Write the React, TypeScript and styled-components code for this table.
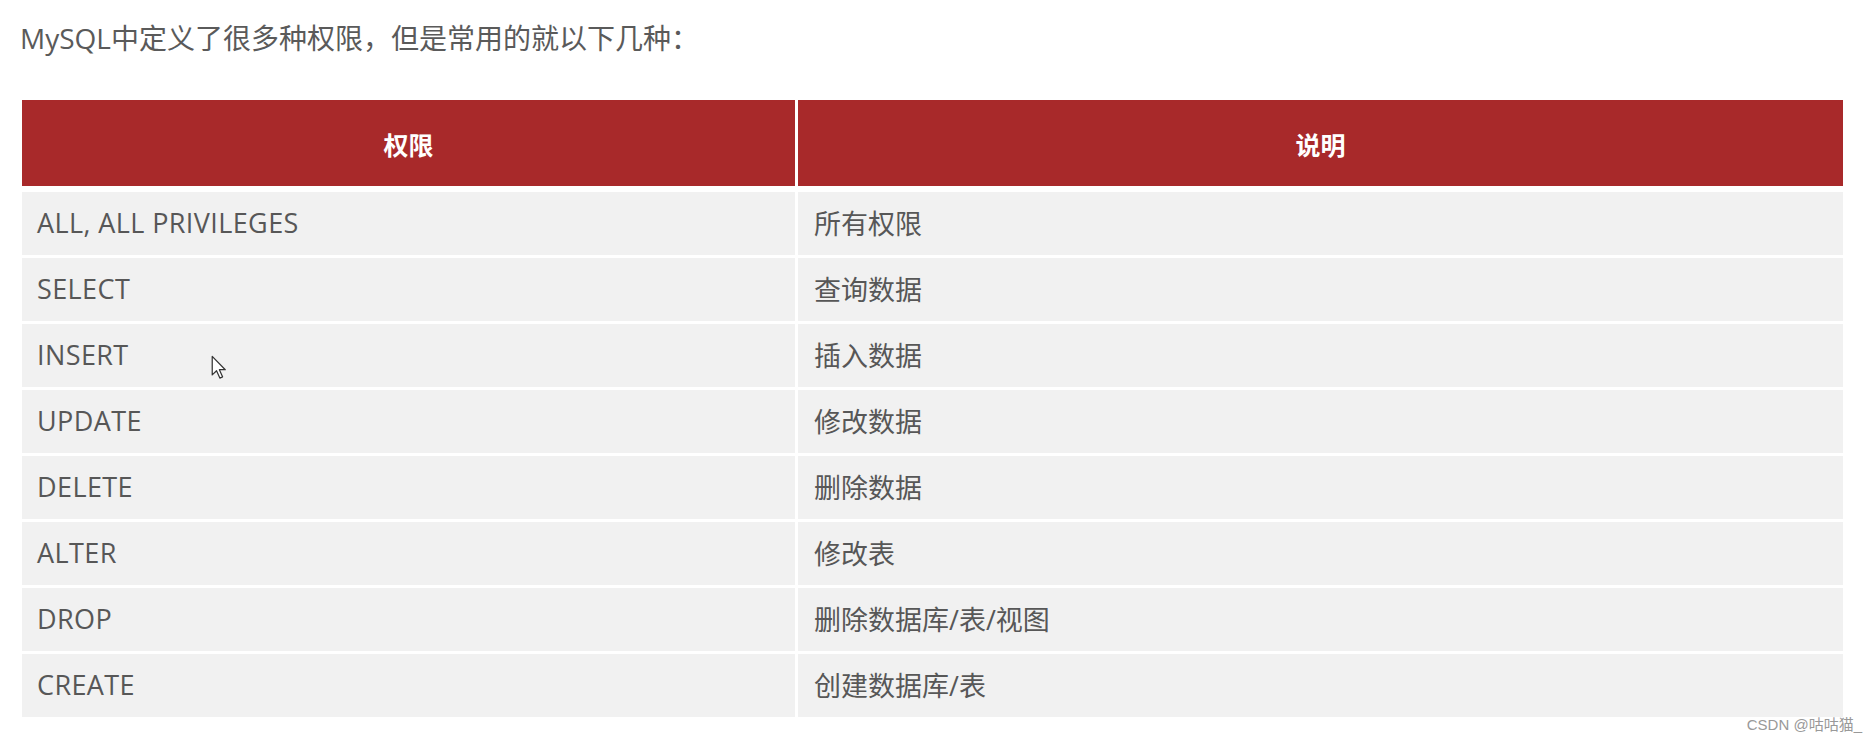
import React from "react";
import styled, { createGlobalStyle } from "styled-components";

const GlobalStyle = createGlobalStyle`
  html, body {
    margin: 0;
    padding: 0;
    background: #ffffff;
  }
  body {
    font-family: "Open Sans", "Noto Sans CJK SC", sans-serif;
  }
`;

const Page = styled.div`
  position: relative;
  width: 1876px;
  height: 740px;
  overflow: hidden;
  background: #ffffff;
  padding: 18px 0 0 20px;
  box-sizing: border-box;
`;

const Heading = styled.p`
  margin: 0;
  font-family: "Open Sans", "Noto Sans CJK SC", sans-serif;
  font-size: 28px;
  line-height: 40px;
  color: #5a5a5a;
`;

const Table = styled.div`
  margin: 42px 0 0 2px;
  width: 1821px;
  display: grid;
  grid-template-columns: 773px 1045px;
  column-gap: 3px;
  row-gap: 3px;
`;

const HeadCell = styled.div`
  height: 86px;
  margin-bottom: 3px;
  background: #a8292a;
  color: #ffffff;
  display: flex;
  align-items: center;
  justify-content: center;
  font-family: "Noto Sans CJK SC", sans-serif;
  font-weight: 700;
  font-size: 25px;
  padding-top: 2px;
  box-sizing: border-box;
`;

const Cell = styled.div<{ $first?: boolean }>`
  height: 63px;
  background: #f1f1f1;
  color: #575757;
  display: flex;
  align-items: center;
  padding: 0 0 2px ${(p) => (p.$first ? "15px" : "16px")};
  box-sizing: border-box;
  font-family: "Open Sans", "Noto Sans CJK SC", sans-serif;
  font-size: 27px;
  letter-spacing: ${(p) => (p.$first ? "0.4px" : "0")};
`;

const Cursor = styled.svg`
  position: absolute;
  left: 211px;
  top: 355px;
  width: 16px;
  height: 25px;
`;

const Watermark = styled.div`
  position: absolute;
  right: 14px;
  bottom: 7px;
  font-family: "Liberation Sans", "Noto Sans CJK SC", sans-serif;
  font-size: 15px;
  line-height: 17px;
  color: #999999;
`;

const rows: [string, string][] = [
  ["ALL, ALL PRIVILEGES", "所有权限"],
  ["SELECT", "查询数据"],
  ["INSERT", "插入数据"],
  ["UPDATE", "修改数据"],
  ["DELETE", "删除数据"],
  ["ALTER", "修改表"],
  ["DROP", "删除数据库/表/视图"],
  ["CREATE", "创建数据库/表"],
];

export default function App() {
  return (
    <>
      <GlobalStyle />
      <Page>
        <Heading>MySQL中定义了很多种权限，但是常用的就以下几种：</Heading>
        <Table>
          <HeadCell>权限</HeadCell>
          <HeadCell>说明</HeadCell>
          {rows.map(([a, b]) => (
            <React.Fragment key={a}>
              <Cell $first>{a}</Cell>
              <Cell>{b}</Cell>
            </React.Fragment>
          ))}
        </Table>
        <Cursor viewBox="0 0 13 20">
          <path
            d="M1 1 L1 16 L4.5 12.6 L7.2 18.6 L9.4 17.6 L6.8 11.8 L11.6 11.8 Z"
            fill="#ffffff"
            stroke="#333333"
            strokeWidth="1"
            strokeLinejoin="round"
          />
        </Cursor>
        <Watermark>CSDN @咕咕猫_</Watermark>
      </Page>
    </>
  );
}
